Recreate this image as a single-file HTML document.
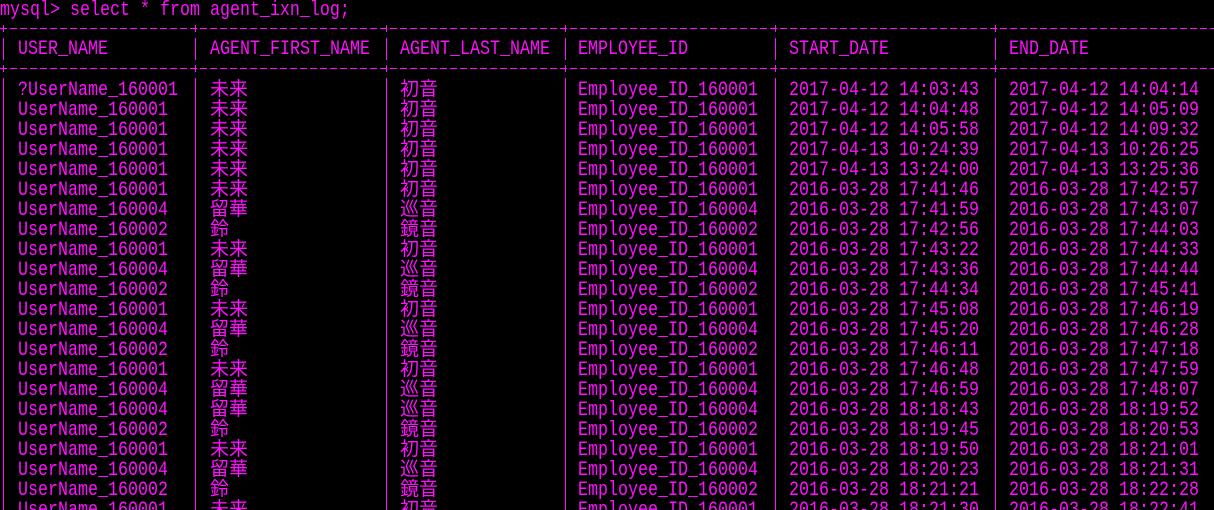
<!DOCTYPE html>
<html><head><meta charset="utf-8"><style>
html,body{margin:0;padding:0;background:#000;width:1214px;height:510px;overflow:hidden;position:relative}
.t{position:absolute;white-space:pre;color:#ff10ff;font-family:"Liberation Mono","Noto Sans CJK JP",monospace;font-size:20px;line-height:20px;transform:scaleX(.833);transform-origin:0 0}
.r{position:absolute;left:0;width:1214px;height:20px}
.r span{position:absolute;top:2px;white-space:pre;color:#ff10ff;font-family:"Liberation Mono","Noto Sans CJK JP",monospace;font-size:20px;line-height:20px;transform:scaleX(.833);transform-origin:0 0}
.r span:nth-child(1){left:18px}
.r span:nth-child(2){left:210px}
.r span:nth-child(3){left:400px}
.r span:nth-child(4){left:578px}
.r span:nth-child(5){left:789px}
.r span:nth-child(6){left:1009px}
.r.d span:nth-child(2),.r.d span:nth-child(3){transform:none;font-size:19px;font-family:"Noto Sans CJK JP",sans-serif;top:-1px}
.h{position:absolute;left:0;width:1214px;height:1px;background:repeating-linear-gradient(90deg,#ff10ff 0 7px,transparent 7px 10px)}
.v{position:absolute;width:1px;background:#ff10ff}
</style></head><body>
<div class="t" style="left:0;top:1px">mysql&gt; select * from agent_ixn_log;</div>
<div class="h" style="top:28px"></div>
<div class="h" style="top:68px"></div>
<div class="v" style="left:3px;top:25px;height:7px"></div><div class="v" style="left:195px;top:25px;height:7px"></div><div class="v" style="left:386px;top:25px;height:7px"></div><div class="v" style="left:565px;top:25px;height:7px"></div><div class="v" style="left:775px;top:25px;height:7px"></div><div class="v" style="left:995px;top:25px;height:7px"></div>
<div class="v" style="left:3px;top:65px;height:7px"></div><div class="v" style="left:195px;top:65px;height:7px"></div><div class="v" style="left:386px;top:65px;height:7px"></div><div class="v" style="left:565px;top:65px;height:7px"></div><div class="v" style="left:775px;top:65px;height:7px"></div><div class="v" style="left:995px;top:65px;height:7px"></div>
<div class="v" style="left:3px;top:38px;height:22px"></div><div class="v" style="left:195px;top:38px;height:22px"></div><div class="v" style="left:386px;top:38px;height:22px"></div><div class="v" style="left:565px;top:38px;height:22px"></div><div class="v" style="left:775px;top:38px;height:22px"></div><div class="v" style="left:995px;top:38px;height:22px"></div>
<div class="v" style="left:3px;top:78px;height:432px"></div><div class="v" style="left:195px;top:78px;height:432px"></div><div class="v" style="left:386px;top:78px;height:432px"></div><div class="v" style="left:565px;top:78px;height:432px"></div><div class="v" style="left:775px;top:78px;height:432px"></div><div class="v" style="left:995px;top:78px;height:432px"></div>

<div class="r" style="top:38px"><span>USER_NAME</span><span>AGENT_FIRST_NAME</span><span>AGENT_LAST_NAME</span><span>EMPLOYEE_ID</span><span>START_DATE</span><span>END_DATE</span></div>

<div class="r d" style="top:79px"><span>?UserName_160001</span><span>未来</span><span>初音</span><span>Employee_ID_160001</span><span>2017-04-12 14:03:43</span><span>2017-04-12 14:04:14</span></div>
<div class="r d" style="top:99px"><span>UserName_160001</span><span>未来</span><span>初音</span><span>Employee_ID_160001</span><span>2017-04-12 14:04:48</span><span>2017-04-12 14:05:09</span></div>
<div class="r d" style="top:119px"><span>UserName_160001</span><span>未来</span><span>初音</span><span>Employee_ID_160001</span><span>2017-04-12 14:05:58</span><span>2017-04-12 14:09:32</span></div>
<div class="r d" style="top:139px"><span>UserName_160001</span><span>未来</span><span>初音</span><span>Employee_ID_160001</span><span>2017-04-13 10:24:39</span><span>2017-04-13 10:26:25</span></div>
<div class="r d" style="top:159px"><span>UserName_160001</span><span>未来</span><span>初音</span><span>Employee_ID_160001</span><span>2017-04-13 13:24:00</span><span>2017-04-13 13:25:36</span></div>
<div class="r d" style="top:179px"><span>UserName_160001</span><span>未来</span><span>初音</span><span>Employee_ID_160001</span><span>2016-03-28 17:41:46</span><span>2016-03-28 17:42:57</span></div>
<div class="r d" style="top:199px"><span>UserName_160004</span><span>留華</span><span>巡音</span><span>Employee_ID_160004</span><span>2016-03-28 17:41:59</span><span>2016-03-28 17:43:07</span></div>
<div class="r d" style="top:219px"><span>UserName_160002</span><span>鈴</span><span>鏡音</span><span>Employee_ID_160002</span><span>2016-03-28 17:42:56</span><span>2016-03-28 17:44:03</span></div>
<div class="r d" style="top:239px"><span>UserName_160001</span><span>未来</span><span>初音</span><span>Employee_ID_160001</span><span>2016-03-28 17:43:22</span><span>2016-03-28 17:44:33</span></div>
<div class="r d" style="top:259px"><span>UserName_160004</span><span>留華</span><span>巡音</span><span>Employee_ID_160004</span><span>2016-03-28 17:43:36</span><span>2016-03-28 17:44:44</span></div>
<div class="r d" style="top:279px"><span>UserName_160002</span><span>鈴</span><span>鏡音</span><span>Employee_ID_160002</span><span>2016-03-28 17:44:34</span><span>2016-03-28 17:45:41</span></div>
<div class="r d" style="top:299px"><span>UserName_160001</span><span>未来</span><span>初音</span><span>Employee_ID_160001</span><span>2016-03-28 17:45:08</span><span>2016-03-28 17:46:19</span></div>
<div class="r d" style="top:319px"><span>UserName_160004</span><span>留華</span><span>巡音</span><span>Employee_ID_160004</span><span>2016-03-28 17:45:20</span><span>2016-03-28 17:46:28</span></div>
<div class="r d" style="top:339px"><span>UserName_160002</span><span>鈴</span><span>鏡音</span><span>Employee_ID_160002</span><span>2016-03-28 17:46:11</span><span>2016-03-28 17:47:18</span></div>
<div class="r d" style="top:359px"><span>UserName_160001</span><span>未来</span><span>初音</span><span>Employee_ID_160001</span><span>2016-03-28 17:46:48</span><span>2016-03-28 17:47:59</span></div>
<div class="r d" style="top:379px"><span>UserName_160004</span><span>留華</span><span>巡音</span><span>Employee_ID_160004</span><span>2016-03-28 17:46:59</span><span>2016-03-28 17:48:07</span></div>
<div class="r d" style="top:399px"><span>UserName_160004</span><span>留華</span><span>巡音</span><span>Employee_ID_160004</span><span>2016-03-28 18:18:43</span><span>2016-03-28 18:19:52</span></div>
<div class="r d" style="top:419px"><span>UserName_160002</span><span>鈴</span><span>鏡音</span><span>Employee_ID_160002</span><span>2016-03-28 18:19:45</span><span>2016-03-28 18:20:53</span></div>
<div class="r d" style="top:439px"><span>UserName_160001</span><span>未来</span><span>初音</span><span>Employee_ID_160001</span><span>2016-03-28 18:19:50</span><span>2016-03-28 18:21:01</span></div>
<div class="r d" style="top:459px"><span>UserName_160004</span><span>留華</span><span>巡音</span><span>Employee_ID_160004</span><span>2016-03-28 18:20:23</span><span>2016-03-28 18:21:31</span></div>
<div class="r d" style="top:479px"><span>UserName_160002</span><span>鈴</span><span>鏡音</span><span>Employee_ID_160002</span><span>2016-03-28 18:21:21</span><span>2016-03-28 18:22:28</span></div>
<div class="r d" style="top:499px"><span>UserName_160001</span><span>未来</span><span>初音</span><span>Employee_ID_160001</span><span>2016-03-28 18:21:30</span><span>2016-03-28 18:22:41</span></div>
</body></html>
